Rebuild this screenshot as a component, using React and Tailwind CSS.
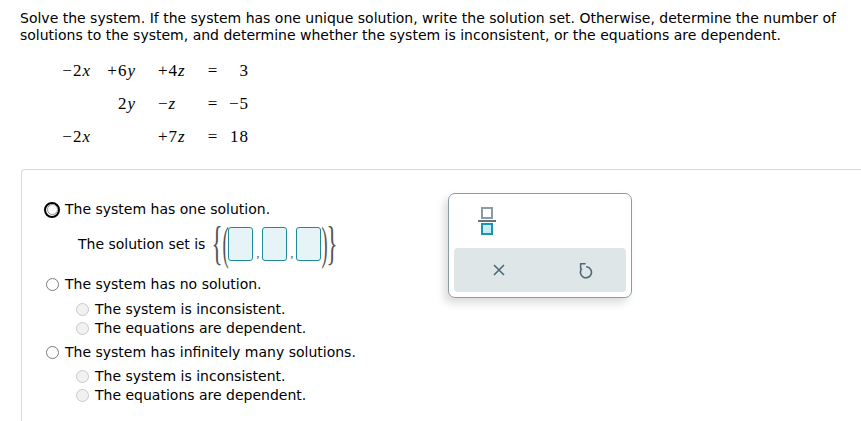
function Radio({ focused, disabled }) {
  if (focused) {
    return (
      <span className="flex h-[16px] w-[16px] shrink-0 items-center justify-center rounded-full border-[2px] border-black">
        <span className="h-[11px] w-[11px] rounded-full border border-[#8a8a8a] bg-white" />
      </span>
    )
  }
  return (
    <span className="flex h-[16px] w-[16px] shrink-0 items-center justify-center">
      <span
        className={
          disabled
            ? 'h-[13px] w-[13px] rounded-full border border-[#c9c9c9] bg-[#f1f1f1]'
            : 'h-[13px] w-[13px] rounded-full border border-[#7a7a7a] bg-white'
        }
      />
    </span>
  )
}

function Choice({ focused, disabled, children, className }) {
  return (
    <div className={'flex h-[19px] items-center gap-[5px] whitespace-nowrap ' + (className || '')}>
      <Radio focused={focused} disabled={disabled} />
      <span>{children}</span>
    </div>
  )
}

function Box() {
  return <span className="inline-block h-[34px] w-[25px] shrink-0 rounded-[3px] border border-[#1d8a96] bg-[#e6f4f8]" />
}

function Glyph({ ch, w, sx }) {
  return (
    <span className={'flex h-[42px] items-center justify-center overflow-visible ' + w}>
      <span className={'text-[46px] leading-[42px] ' + sx}>{ch}</span>
    </span>
  )
}

const M = '\u2212'

function Eq() {
  const v = 'italic'
  const rows = [
    [<>{M}2<i className={v}>x</i></>, <>+6<i className={v}>y</i></>, <>+4<i className={v}>z</i></>, '=', '3'],
    ['', <>2<i className={v}>y</i></>, <>{M}<i className={v}>z</i></>, '=', <>{M}5</>],
    [<>{M}2<i className={v}>x</i></>, '', <>+7<i className={v}>z</i></>, '=', '18'],
  ]
  return (
    <div className="mt-[16px] flex flex-col gap-[11px] pl-[58px] font-['Liberation_Serif',serif] text-[17px] leading-[22px]">
      {rows.map((r, i) => (
        <div key={i} className="flex whitespace-nowrap">
          <span className="w-[33px] text-right tracking-[1px]">{r[0]}</span>
          <span className="w-[45px] text-right tracking-[1px]">{r[1]}</span>
          <span className="ml-[22px] w-[40px] tracking-[1px]">{r[2]}</span>
          <span className="w-[29px] text-center">{r[3]}</span>
          <span className="w-[22px] text-right tracking-[1px]">{r[4]}</span>
        </div>
      ))}
    </div>
  )
}

function Palette() {
  return (
    <div className="mt-[23px] h-[105px] w-[184px] rounded-[7px] border border-[#8c9ca4] bg-white p-[5px] shadow-[-4px_5px_8px_rgba(0,0,0,0.14)]">
      <div className="flex h-[49px] items-start pl-[24px] pt-[8px]">
        <svg width="18" height="28" viewBox="0 0 18 28">
          <rect x="4" y="1" width="10" height="10" fill="white" stroke="#8a9ba3" strokeWidth="2" />
          <rect x="0" y="13" width="18" height="2" fill="#5f7480" />
          <rect x="4" y="17" width="10" height="10" fill="#c7ecf3" stroke="#1798ae" strokeWidth="2" />
        </svg>
      </div>
      <div className="flex h-[44px] items-center justify-around rounded-[4px] bg-[#dfe6e8] px-[12px]">
        <svg width="14" height="14" viewBox="0 0 14 14" className="ml-[6px]">
          <path d="M2 2 L12 12 M12 2 L2 12" stroke="#4b6a76" strokeWidth="1.6" fill="none" />
        </svg>
        <svg width="17" height="18" viewBox="0 0 16 17" className="ml-[30px]">
          <path d="M4.2 7.6 A5.2 5.2 0 1 0 9.2 5.5" stroke="#4b6a76" strokeWidth="1.5" fill="none" strokeLinecap="round" />
          <path d="M3.4 7 V2.6 H7.6" stroke="#4b6a76" strokeWidth="1.5" fill="none" strokeLinejoin="round" strokeLinecap="round" />
        </svg>
      </div>
    </div>
  )
}

export default function App() {
  return (
    <div className="h-[421px] w-[861px] overflow-hidden bg-white font-['DejaVu_Sans',sans-serif] text-[14px] text-black">
      <p className="whitespace-nowrap px-[20px] pt-[10px] leading-[17px]">
        Solve the system. If the system has one unique solution, write the solution set. Otherwise, determine the number of
        <br />
        solutions to the system, and determine whether the system is inconsistent, or the equations are dependent.
      </p>
      <Eq />
      <div className="ml-[21px] mt-[21px] flex h-[260px] rounded-tl-[4px] border-l border-t border-[#d6dcdc]">
        <div className="w-[426px] pl-[22px] pt-[30px]">
          <Choice focused>The system has one solution.</Choice>
          <div className="mt-[4px] flex h-[42px] items-center pl-[34px]">
            <span className="mr-[7px]">The solution set is</span>
            <span className="flex items-center font-['Liberation_Serif',serif] text-[#555]">
              <Glyph ch="{" w="w-[10px]" sx="scale-x-[0.5]" />
              <Glyph ch="(" w="w-[6px]" sx="scale-x-[0.4]" />
              <Box />
              <span className="flex w-[9px] justify-center self-end pb-[5px] text-[13px] leading-[14px]">,</span>
              <Box />
              <span className="flex w-[9px] justify-center self-end pb-[5px] text-[13px] leading-[14px]">,</span>
              <Box />
              <Glyph ch=")" w="w-[6px]" sx="scale-x-[0.4]" />
              <Glyph ch="}" w="w-[10px]" sx="scale-x-[0.5]" />
            </span>
          </div>
          <Choice className="mt-[10px]">The system has no solution.</Choice>
          <div className="mt-[6px] pl-[30px]">
            <Choice disabled>The system is inconsistent.</Choice>
            <Choice disabled>The equations are dependent.</Choice>
          </div>
          <Choice className="mt-[5px]">The system has infinitely many solutions.</Choice>
          <div className="mt-[5px] pl-[30px]">
            <Choice disabled>The system is inconsistent.</Choice>
            <Choice disabled>The equations are dependent.</Choice>
          </div>
        </div>
        <Palette />
      </div>
    </div>
  )
}
